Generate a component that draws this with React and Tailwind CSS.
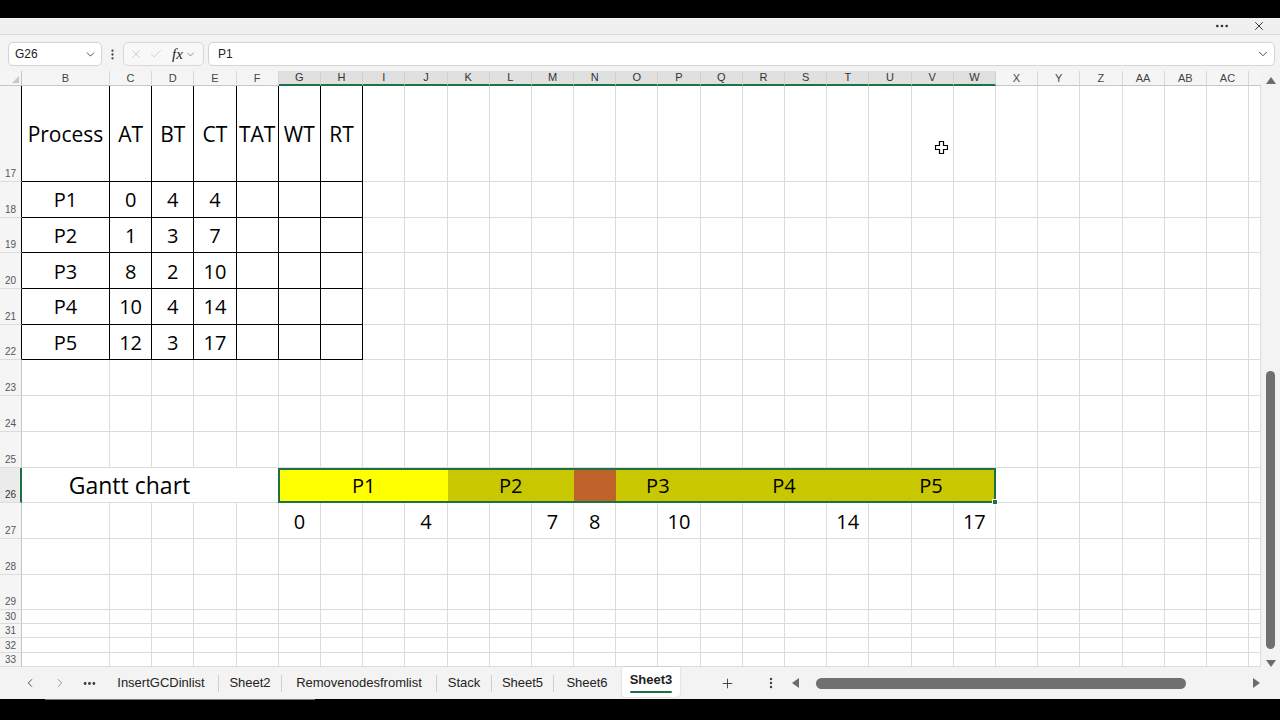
import React from 'react';
import { ChevronDown, ChevronLeft, ChevronRight, X, Check, Plus, EllipsisVertical, Ellipsis } from 'lucide-react';

const COLS = ['B','C','D','E','F','G','H','I','J','K','L','M','N','O','P','Q','R','S','T','U','V','W','X','Y','Z','AA','AB','AC'];

const TABLE = {
  17: ['Process','AT','BT','CT','TAT','WT','RT'],
  18: ['P1','0','4','4','','',''],
  19: ['P2','1','3','7','','',''],
  20: ['P3','8','2','10','','',''],
  21: ['P4','10','4','14','','',''],
  22: ['P5','12','3','17','','',''],
};

const ROW27 = { 5: '0', 8: '4', 11: '7', 12: '8', 14: '10', 18: '14', 21: '17' };

function RowHeader({ r, tall, black, selected }) {
  let cls = 'bg-[#f5f5f5] border-b border-b-[#dcdcdc] border-r border-r-[#c6c6c6] flex items-end pl-[5px] text-[10px] leading-none text-[#555] font-["Liberation_Sans",sans-serif]';
  if (black) cls = 'bg-[#f5f5f5] border-b border-b-[#dcdcdc] border-r border-r-black flex items-end pl-[5px] text-[10px] leading-none text-[#555] font-["Liberation_Sans",sans-serif]';
  if (selected) cls = 'bg-[#ebebeb] border-b border-b-[#dcdcdc] border-r-2 border-r-[#1e7145] flex items-end pl-[5px] text-[10px] leading-none text-[#333] font-["Liberation_Sans",sans-serif]';
  return <div className={cls}><span className={tall ? 'pb-[1px]' : 'pb-[2px]'}>{r}</span></div>;
}

function Cell({ text, black, big }) {
  let cls = 'bg-white border-r border-b border-[#dcdcdc] flex items-center justify-center pt-[2px] whitespace-nowrap overflow-visible text-[20px] leading-none text-black font-["Open_Sans",sans-serif]';
  if (black) cls = 'bg-white border-r border-b border-black flex items-center justify-center pt-[2px] whitespace-nowrap overflow-visible text-[20px] leading-none text-black font-["Open_Sans",sans-serif]';
  if (black && big) cls = 'bg-white border-r border-b border-black flex items-center justify-center pt-[2px] whitespace-nowrap overflow-visible text-[21px] leading-none text-black font-["Open_Sans",sans-serif]';
  return <div className={cls}>{text}</div>;
}

function NormalRow({ r, small }) {
  const cells = [];
  for (let c = 0; c < 29; c++) {
    let text = '';
    if (r === 27 && ROW27[c] !== undefined) text = ROW27[c];
    cells.push(<Cell key={c} text={text} />);
  }
  return (
    <>
      <RowHeader r={r} tall={small} />
      {cells}
    </>
  );
}

function TableRow({ r }) {
  const vals = TABLE[r];
  const cells = [];
  for (let c = 0; c < 29; c++) {
    if (c < 7) cells.push(<Cell key={c} text={vals[c]} black big={r === 17} />);
    else cells.push(<Cell key={c} text="" />);
  }
  return (
    <>
      <RowHeader r={r} black />
      {cells}
    </>
  );
}

function GanttRow() {
  const rest = [];
  for (let c = 22; c < 29; c++) rest.push(<Cell key={c} text="" />);
  return (
    <>
      <RowHeader r={26} selected />
      <div className="col-span-5 bg-white border-b border-[#dcdcdc] flex items-center pt-[2px]">
        <div className="w-[215px] text-center text-[23px] leading-none text-black font-['Open_Sans',sans-serif] whitespace-nowrap">Gantt chart</div>
      </div>
      <div className="col-span-17 relative border-2 border-[#1e7145] -ml-px flex text-[20px] leading-none text-black font-['Open_Sans',sans-serif]">
        <div className="flex-[4] bg-[#ffff00] flex items-center justify-center pt-[2px]">P1</div>
        <div className="flex-[3] bg-[#c9c800] flex items-center justify-center pt-[2px]">P2</div>
        <div className="flex-[1] bg-[#c0632b]"></div>
        <div className="flex-[2] bg-[#c9c800] flex items-center justify-center pt-[2px]">P3</div>
        <div className="flex-[4] bg-[#c9c800] flex items-center justify-center pt-[2px]">P4</div>
        <div className="flex-[3] bg-[#c9c800] flex items-center justify-center pt-[2px]">P5</div>
        <div className="absolute -right-[4px] -bottom-[4px] w-[6px] h-[6px] bg-[#1e7145] border border-white"></div>
      </div>
      {rest}
    </>
  );
}

function HeaderRow() {
  return (
    <>
      <div className="bg-[#f5f5f5] border-b border-b-[#c6c6c6] border-r border-r-[#c6c6c6] relative">
        <svg className="absolute right-[2px] bottom-[2px]" width="7" height="7" viewBox="0 0 7 7"><polygon points="7,0 7,7 0,7" fill="#c8c8c8" /></svg>
      </div>
      {COLS.map((l, i) => {
        const sel = i >= 5 && i <= 21;
        return (
          <div
            key={l}
            className={sel
              ? 'bg-[#e0e0e0] border-b-2 border-b-[#1e7145] border-r border-r-[#d0d0d0] flex items-center justify-center text-[11px] leading-none text-[#333] font-["Liberation_Sans",sans-serif]'
              : 'bg-[#f5f5f5] border-b border-b-[#c6c6c6] border-r border-r-[#d8d8d8] flex items-center justify-center text-[11px] leading-none text-[#444] font-["Liberation_Sans",sans-serif]'}
          >
            {l}
          </div>
        );
      })}
      <div className="bg-[#f5f5f5] border-b border-b-[#c6c6c6]"></div>
    </>
  );
}

function Grid() {
  const rows = [];
  rows.push(<HeaderRow key="h" />);
  for (let r = 17; r <= 33; r++) {
    if (r >= 17 && r <= 22) rows.push(<TableRow key={r} r={r} />);
    else if (r === 26) rows.push(<GanttRow key={r} />);
    else rows.push(<NormalRow key={r} r={r} small={r >= 30} />);
  }
  return (
    <div className="grid grid-cols-[22px_88px_repeat(27,42.2px)_11.6px] grid-rows-[15px_96px_repeat(12,35.7px)_repeat(4,14.1px)] w-[1261px] bg-white">
      {rows}
    </div>
  );
}

function Tab({ w, children }) {
  return <div className={w + ' flex items-center justify-center h-full text-[13px] text-[#222] font-["Liberation_Sans",sans-serif] whitespace-nowrap'}>{children}</div>;
}

function Sep() {
  return <div className="w-px h-[17px] bg-[#d0d0d0]"></div>;
}

export default function App() {
  return (
    <div className="relative w-[1280px] h-[720px] bg-black flex flex-col overflow-hidden">
      <div className="h-[18px] bg-black"></div>
      {/* title bar */}
      <div className="h-[16px] bg-[#f0f0f0] border-b border-[#d9d9d9] flex items-center justify-end pr-[14px] box-content">
        <Ellipsis size={16} strokeWidth={2} className="text-[#333] mr-[22px]" />
        <X size={14} strokeWidth={1.5} className="text-[#222]" />
      </div>
      {/* formula bar */}
      <div className="h-[36px] bg-[#f3f3f3] flex items-start pt-[7px]">
        <div className="ml-[8px] w-[94px] h-[24px] bg-white border border-[#d4d4d4] rounded-[5px] flex items-center justify-between pl-[6px] pr-[4px] text-[12px] text-[#222] font-['Liberation_Sans',sans-serif]">
          <span>G26</span>
          <ChevronDown size={13} strokeWidth={1.6} className="text-[#333]" />
        </div>
        <div className="w-[21px] h-[24px] flex items-center justify-center">
          <EllipsisVertical size={13} strokeWidth={2.2} className="text-[#444]" />
        </div>
        <div className="w-[81px] h-[24px] bg-[#f8f8f8] border border-[#d8d8d8] rounded-[5px] flex items-center pl-[5px] gap-[6px]">
          <X size={14} strokeWidth={1.2} className="text-[#bdbdbd]" />
          <Check size={14} strokeWidth={1.2} className="text-[#bdbdbd]" />
          <span className="ml-[3px] text-[15px] italic text-[#222] font-['Liberation_Serif',serif] leading-none">fx</span>
          <ChevronDown size={11} strokeWidth={1.5} className="text-[#666] -ml-[4px]" />
        </div>
        <div className="ml-[4px] w-[1067px] h-[24px] bg-white border border-[#d4d4d4] rounded-[5px] flex items-center justify-between pl-[9px] pr-[4px] text-[12px] text-[#222] font-['Liberation_Sans',sans-serif]">
          <span>P1</span>
          <ChevronDown size={14} strokeWidth={1.5} className="text-[#333]" />
        </div>
      </div>
      {/* grid + vertical scrollbar */}
      <div className="flex h-[596px] bg-white">
        <Grid />
        <div className="w-[19px] bg-[#f3f3f3] flex flex-col items-center">
          <svg className="mt-[6px]" width="10" height="7" viewBox="0 0 10 7"><polygon points="5,0 10,7 0,7" fill="#6b6b6b" /></svg>
          <div className="mt-[287px] w-[9px] h-[278px] rounded-full bg-[#707070]"></div>
          <svg className="mt-[11px]" width="10" height="7" viewBox="0 0 10 7"><polygon points="0,0 10,0 5,7" fill="#6b6b6b" /></svg>
        </div>
      </div>
      {/* sheet tabs */}
      <div className="h-[32px] bg-[#f3f3f3] flex items-center">
        <div className="ml-[20px] w-[20px] flex justify-center"><ChevronLeft size={14} strokeWidth={1.5} className="text-[#444]" /></div>
        <div className="ml-[10px] w-[20px] flex justify-center"><ChevronRight size={14} strokeWidth={1.5} className="text-[#888]" /></div>
        <div className="ml-[9px] w-[20px] flex justify-center"><Ellipsis size={15} strokeWidth={2.5} className="text-[#333]" /></div>
        <div className="ml-[5px] flex items-center h-full">
          <Tab w="w-[114px]">InsertGCDinlist</Tab>
          <Sep />
          <Tab w="w-[62px]">Sheet2</Tab>
          <Sep />
          <Tab w="w-[154px]">Removenodesfromlist</Tab>
          <Sep />
          <Tab w="w-[54px]">Stack</Tab>
          <Sep />
          <Tab w="w-[61px]">Sheet5</Tab>
          <Sep />
          <Tab w="w-[66px]">Sheet6</Tab>
          <div className="ml-[2px] w-[58px] h-[30px] -mt-[2px] bg-white rounded-b-[4px] shadow-[0_0_2px_rgba(0,0,0,0.2)] flex flex-col items-center justify-start pt-[6px]">
            <span className="text-[13px] leading-none font-bold text-[#222] font-['Liberation_Sans',sans-serif]">Sheet3</span>
            <div className="mt-[5px] w-[42px] h-[2px] bg-[#1e7145] rounded-full"></div>
          </div>
        </div>
        <div className="ml-[37px] w-[20px] flex justify-center"><Plus size={15} strokeWidth={1.4} className="text-[#333]" /></div>
        <div className="ml-[24px] w-[20px] flex justify-center"><EllipsisVertical size={14} strokeWidth={2.2} className="text-[#444]" /></div>
        <div className="ml-[8px] w-[12px] flex justify-center">
          <svg width="7" height="10" viewBox="0 0 7 10"><polygon points="7,0 7,10 0,5" fill="#6b6b6b" /></svg>
        </div>
        <div className="ml-[15px] w-[370px] h-[11px] rounded-full bg-[#707070]"></div>
        <div className="ml-[64px] w-[12px] flex justify-center">
          <svg width="7" height="10" viewBox="0 0 7 10"><polygon points="0,0 7,5 0,10" fill="#6b6b6b" /></svg>
        </div>
      </div>
      <div className="flex-1 bg-black relative">
        <div className="absolute left-[45px] top-0 w-[270px] h-px bg-[#777]"></div>
      </div>
      {/* mouse cursor */}
      <svg className="absolute left-[935px] top-[141px]" width="13" height="13" viewBox="0 0 13 13">
        <path d="M4.5 0.5 H8.5 V4.5 H12.5 V8.5 H8.5 V12.5 H4.5 V8.5 H0.5 V4.5 H4.5 Z" fill="white" stroke="black" strokeWidth="1.2" />
      </svg>
    </div>
  );
}
